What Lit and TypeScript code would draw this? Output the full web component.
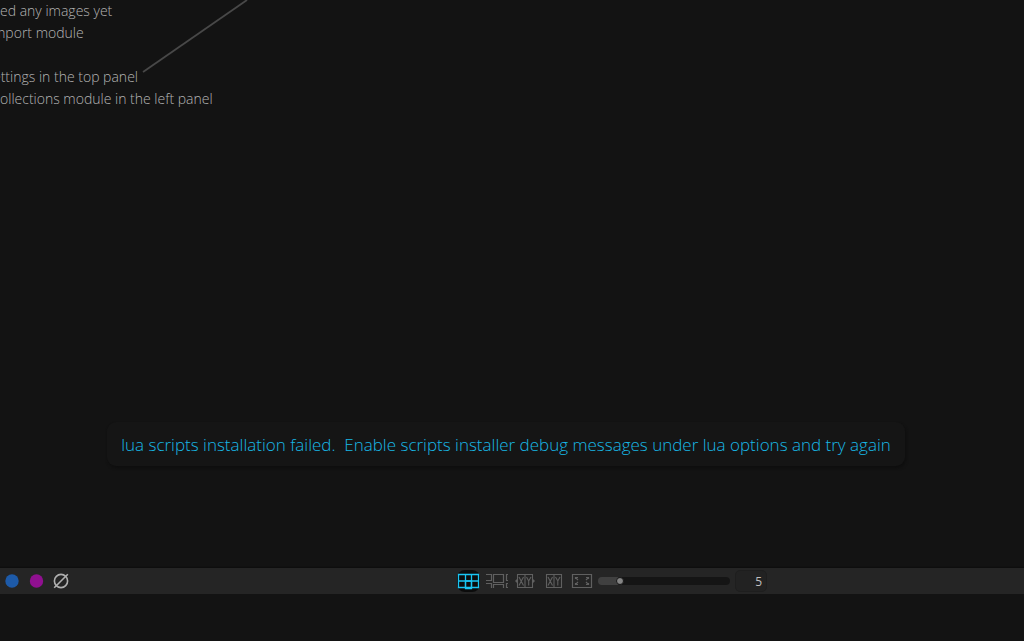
import { LitElement, html, css } from "lit";
import { customElement, state } from "lit/decorators.js";

@customElement("app-root")
export class AppRoot extends LitElement {
  @state() private zoom = 5;

  static styles = css`
    :host {
      display: flex;
      flex-direction: column;
      height: 100vh;
      overflow: hidden;
      background: #131313;
      color: #b4b4b4;
      font-family: "Open Sans", "Noto Sans", sans-serif;
      font-weight: 300;
    }
    .stage {
      position: relative;
      flex: 1;
      min-height: 0;
      overflow: hidden;
    }
    .hints {
      margin: 0;
      font-size: 14px;
      line-height: 22px;
      white-space: nowrap;
    }
    .hints p {
      margin: 0;
    }
    .hints .cut {
      margin-left: -7px;
    }
    .hints .gap {
      margin-top: 22px;
    }
    .pointer {
      position: absolute;
      left: 142px;
      top: 0;
    }
    .toast {
      position: absolute;
      left: 0;
      right: 12px;
      bottom: 102px;
      display: flex;
      justify-content: center;
    }
    .toast span {
      padding: 11px 14px 9px;
      border-radius: 9px;
      background: #151515;
      box-shadow: 1px 2px 3px #0e0e0e;
      color: #18b8e6;
      font-size: 17px;
      line-height: 24px;
      white-space: pre;
    }
    .bar {
      display: grid;
      grid-template-columns: 457px auto 1fr;
      align-items: center;
      height: 26px;
      background: #252525;
      box-shadow: 0 -1px 1px #0e0e0e;
    }
    .labels,
    .tools {
      display: flex;
      align-items: center;
    }
    .labels {
      gap: 8px;
      padding-left: 4px;
    }
    button {
      display: flex;
      padding: 0;
      border: 0;
      background: none;
      color: #606060;
    }
    .labels button {
      color: #b0b0b0;
    }
    .tools {
      gap: 5px;
    }
    .tools .on {
      color: #19c4f2;
      background: #0c0c0c;
      border-radius: 8px;
    }
    svg {
      display: block;
      fill: none;
      stroke: currentColor;
    }
    input[type="range"] {
      appearance: none;
      width: 132px;
      height: 8px;
      margin: 0;
      border-radius: 4px;
      background: linear-gradient(to right, #404040 20px, #151515 20px);
    }
    input[type="range"]::-webkit-slider-thumb {
      appearance: none;
      box-sizing: border-box;
      width: 8px;
      height: 8px;
      border: 1px solid #161616;
      border-radius: 50%;
      background: #858585;
    }
    input[type="text"] {
      box-sizing: border-box;
      width: 32px;
      height: 22px;
      padding: 0 4px 0 0;
      border: 1px solid #1e1e1e;
      border-radius: 5px;
      background: #222;
      color: #c0c0c0;
      font: 400 12px "Open Sans", "Noto Sans", sans-serif;
      text-align: right;
    }
    .footer {
      height: 47px;
    }
  `;

  private onZoom(e: Event) {
    this.zoom = Number((e.target as HTMLInputElement).value);
  }

  render() {
    return html`
      <main class="stage">
        <div class="hints">
          <p>ed any images yet</p>
          <p class="cut">mport module</p>
          <p class="cut gap">ettings in the top panel</p>
          <p>ollections module in the left panel</p>
        </div>
        <svg class="pointer" width="108" height="74" viewBox="0 0 108 74" stroke-width="1.8" style="color:#484848">
          <path d="M1 72L105 0" />
        </svg>
        <div class="toast" role="status">
          <span>lua scripts installation failed.  Enable scripts installer debug messages under lua options and try again</span>
        </div>
      </main>
      <nav class="bar">
        <div class="labels">
          <button aria-label="blue label">
            <svg width="16" height="16"><circle cx="8" cy="8" r="6.7" fill="#1d5aa8" stroke="none" /></svg>
          </button>
          <button aria-label="purple label">
            <svg width="17" height="16"><circle cx="8.5" cy="8" r="6.7" fill="#901090" stroke="none" /></svg>
          </button>
          <button aria-label="clear labels">
            <svg width="18" height="18" stroke-width="1.6"><circle cx="8" cy="9" r="6.6" /><path d="M1.2 15.8L14.8 2.2" /></svg>
          </button>
        </div>
        <div class="tools">
          <button class="on" aria-label="file manager">
            <svg width="23" height="22" stroke-width="1.3">
              <path d="M1.5 4.5H21.5V17.5H1.5ZM1.5 11H21.5M8.5 4.5V17.5M14.5 4.5V17.5" />
              <path d="M8.5 11H14.5V18.5H8.5Z" />
            </svg>
          </button>
          <button aria-label="zoomable light table">
            <svg width="24" height="22" stroke-width="1.2">
              <path d="M1 4.5H6.5V10.5H1M8.5 4.5H18.5V12.5H8.5ZM23 4.5H21.5V10.5H23M1 13.5H6.5V18M8.5 18V14.5H18.5V18M23 13.5H21.5V17.5H23" />
            </svg>
          </button>
          <button aria-label="culling">
            <svg width="22" height="22" stroke-width="1.1">
              <path d="M3.5 4.5H18.5V17.5H3.5ZM11 4.5V17.5M5 7L9.5 15.5M9.5 7L5 15.5M12.5 7L14.7 11L17 7M14.7 11V15.5" />
              <path d="M3 9V13L1 11ZM19 9V13L21 11Z" fill="currentColor" stroke="none" />
            </svg>
          </button>
          <button aria-label="culling, dynamic">
            <svg width="25" height="22" stroke-width="1.1">
              <path d="M5.5 4.5H20.5V17.5H5.5ZM13 4.5V17.5M7 7L11.5 15.5M11.5 7L7 15.5M14.5 7L16.8 11L19 7M16.8 11V15.5" />
            </svg>
          </button>
          <button aria-label="full preview">
            <svg width="22" height="22" stroke-width="1.2">
              <path d="M1.5 4.5H20.5V17.5H1.5Z" />
              <path d="M4.5 9V7.5H7M4.8 7.8L7 10M17.5 9V7.5H15M17.2 7.8L15 10M4.5 13V14.5H7M4.8 14.2L7 12M17.5 13V14.5H15M17.2 14.2L15 12" />
            </svg>
          </button>
          <input type="range" min="1" max="29" .value=${String(this.zoom)} aria-label="images per row" @input=${this.onZoom} />
          <input type="text" .value=${String(this.zoom)} aria-label="images per row value" @change=${this.onZoom} />
        </div>
      </nav>
      <footer class="footer"></footer>
    `;
  }
}
